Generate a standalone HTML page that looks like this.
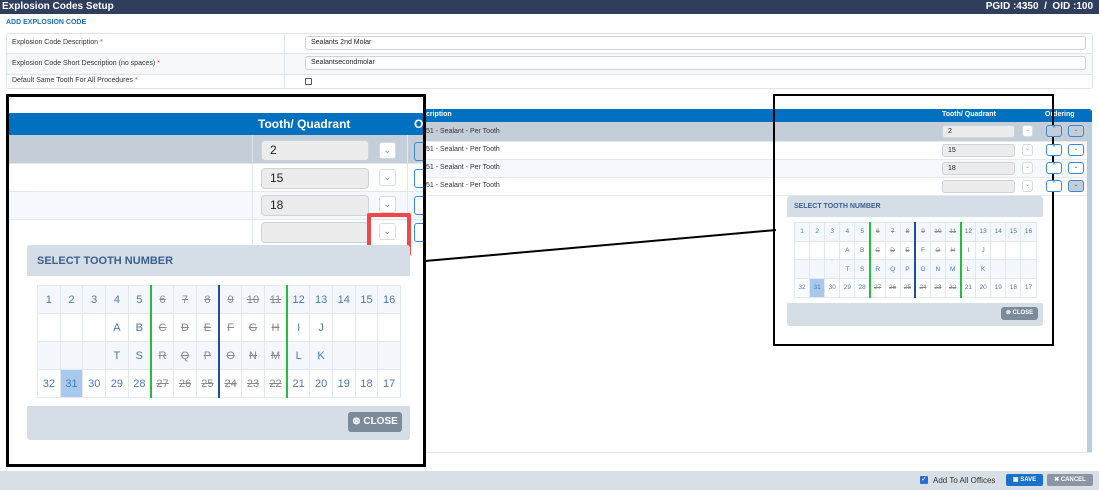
<!DOCTYPE html>
<html><head><meta charset="utf-8">
<style>
*{box-sizing:border-box;margin:0;padding:0}
body{width:1099px;height:490px;overflow:hidden;background:#fff;font-family:"Liberation Sans",sans-serif;position:relative}
.a{position:absolute}
.top{left:0;top:0;width:1099px;height:14px;background:#2f3e5c;color:#fff;font-size:10px;font-weight:bold;line-height:14px}
.lbl{font-size:7px;color:#333}
.req{color:#e03030}
.inp{background:#fff;border:1px solid #ccd3da;border-radius:3px;font-size:7px;padding-left:5px;line-height:12px;color:#222}
.grid{border-collapse:collapse;position:absolute;background:#fff}
.grid td{border:1px solid #e1e7ee;text-align:center;color:#4a78b0;padding:0}
.grid tr:nth-child(odd) td{background:#f4f8fc}
.grid td.s{color:#888;text-decoration:line-through}
.grid td.g{border-left:2px solid #22c03a}
.grid td.b{border-left:2px solid #1a4f9c}
.grid td.h{background:#a8c8ee!important}
.big td{width:22.7px;height:28px;font-size:11px}
.sm td{width:15.1px;height:18.7px;font-size:6.5px}
.dd{background:#fff;border:1px solid #d5dbe2;border-radius:3px;color:#7a9cc4;text-align:center}
.ord{border:1px solid #3a86d0;border-radius:3px;background:#fff;color:#2a6fc0;text-align:center}
</style></head><body>
<div class="a top"><span style="padding-left:2px">Explosion Codes Setup</span><span class="a" style="right:6px;top:0">PGID :4350 &nbsp;/&nbsp; OID :100</span></div>
<div class="a" style="left:6px;top:19px;font-size:7px;font-weight:bold;color:#1a6fc0">ADD EXPLOSION CODE</div>
<div class="a" style="left:6px;top:33px;width:1087px;height:56px;border:1px solid #dde3ea;border-radius:3px"></div>
<div class="a" style="left:7px;top:53px;width:1085px;height:1px;background:#dde3ea"></div>
<div class="a" style="left:7px;top:74px;width:1085px;height:1px;background:#dde3ea"></div>
<div class="a" style="left:7px;top:54px;width:1085px;height:20px;background:#f6f8fa"></div>
<div class="a" style="left:284px;top:34px;width:1px;height:54px;background:#dde3ea"></div>
<div class="a lbl" style="left:12px;top:39px">Explosion Code Description <span class="req">*</span></div>
<div class="a lbl" style="left:12px;top:60px">Explosion Code Short Description (no spaces) <span class="req">*</span></div>
<div class="a lbl" style="left:12px;top:77px">Default Same Tooth For All Procedures <span class="req">*</span></div>
<div class="a inp" style="left:305px;top:36px;width:781px;height:14px">Sealants 2nd Molar</div>
<div class="a inp" style="left:305px;top:56px;width:781px;height:14px">Sealantsecondmolar</div>
<div class="a" style="left:305px;top:78px;width:7px;height:7px;border:1px solid #555;border-radius:1px"></div>

<div class="a" style="left:420px;top:109px;width:672px;height:13px;background:#0070c0;border-radius:3px 3px 0 0"></div>
<div class="a" style="left:426px;top:111px;font-size:7px;font-weight:bold;color:#fff">cription</div>
<div class="a" style="left:942px;top:111px;font-size:7px;font-weight:bold;color:#fff">Tooth/ Quadrant</div>
<div class="a" style="left:1045px;top:111px;font-size:7px;font-weight:bold;color:#fff">Ordering</div>
<div class="a" style="left:420px;top:122px;width:668px;height:19px;background:#c4ced8"></div>
<div class="a" style="left:420px;top:159px;width:668px;height:18px;background:#f5f9fd"></div>
<div class="a" style="left:420px;top:141px;width:668px;height:1px;background:#e3e9ef"></div>
<div class="a" style="left:420px;top:159px;width:668px;height:1px;background:#e3e9ef"></div>
<div class="a" style="left:420px;top:177px;width:668px;height:1px;background:#e3e9ef"></div>
<div class="a" style="left:420px;top:195px;width:668px;height:1px;background:#e3e9ef"></div>
<div class="a" style="left:426px;top:128px;font-size:7px;color:#333">51 - Sealant - Per Tooth</div>
<div class="a" style="left:426px;top:146px;font-size:7px;color:#333">51 - Sealant - Per Tooth</div>
<div class="a" style="left:426px;top:164px;font-size:7px;color:#333">51 - Sealant - Per Tooth</div>
<div class="a" style="left:426px;top:182px;font-size:7px;color:#333">51 - Sealant - Per Tooth</div>
<div class="a" style="left:1087px;top:122px;width:5px;height:330px;background:#b7cde4"></div>
<div class="a" style="left:420px;top:452px;width:672px;height:1px;background:#dfe5ec"></div>
<div class="a" style="left:0;top:471px;width:1099px;height:19px;background:#d8dfe7"></div>
<div class="a" style="left:920px;top:476px;width:8px;height:8px;background:#2a6fd0;border-radius:1px;color:#fff;font-size:7px;line-height:8px;text-align:center">✓</div>
<div class="a" style="left:933px;top:476px;font-size:8px;color:#333">Add To All Offices</div>
<div class="a" style="left:1006px;top:474px;width:37px;height:12px;background:#1a72c8;border-radius:2px;color:#fff;font-size:6px;line-height:12px;text-align:center;font-weight:bold">▣ SAVE</div>
<div class="a" style="left:1047px;top:474px;width:46px;height:12px;background:#8c96a3;border-radius:2px;color:#fff;font-size:6px;line-height:12px;text-align:center;font-weight:bold">✖ CANCEL</div>

<div class="a" style="left:773px;top:94px;width:281px;height:252px;border:2px solid #000;background:transparent"></div>
<div class="a" style="left:775px;top:96px;width:277px;height:12px;background:#fff"></div>
<div class="a inp" style="left:942px;top:125px;width:73px;height:13px;background:#ececec">2</div>
<div class="a inp" style="left:942px;top:144px;width:73px;height:13px;background:#ececec">15</div>
<div class="a inp" style="left:942px;top:162px;width:73px;height:13px;background:#ececec">18</div>
<div class="a inp" style="left:942px;top:180px;width:73px;height:13px;background:#ececec"></div>
<div class="a dd" style="left:1022px;top:125px;width:11px;height:12px;font-size:6px">⌄</div>
<div class="a dd" style="left:1022px;top:144px;width:11px;height:12px;font-size:6px">⌄</div>
<div class="a dd" style="left:1022px;top:162px;width:11px;height:12px;font-size:6px">⌄</div>
<div class="a dd" style="left:1022px;top:180px;width:11px;height:12px;font-size:6px">⌄</div>
<div class="a ord" style="left:1046px;top:125px;width:16px;height:12px;font-size:6px;background:#c4ced8">^</div>
<div class="a ord" style="left:1068px;top:125px;width:16px;height:12px;font-size:6px;background:#c4ced8">⌄</div>
<div class="a ord" style="left:1046px;top:144px;width:16px;height:12px;font-size:6px">^</div>
<div class="a ord" style="left:1068px;top:144px;width:16px;height:12px;font-size:6px">⌄</div>
<div class="a ord" style="left:1046px;top:162px;width:16px;height:12px;font-size:6px">^</div>
<div class="a ord" style="left:1068px;top:162px;width:16px;height:12px;font-size:6px">⌄</div>
<div class="a ord" style="left:1046px;top:180px;width:16px;height:12px;font-size:6px">^</div>
<div class="a ord" style="left:1068px;top:180px;width:16px;height:12px;font-size:6px;background:#c4ced8">⌄</div>
<div class="a" style="left:787px;top:196px;width:256px;height:130px;background:#d5dee7;border-radius:3px"></div>
<div class="a" style="left:787px;top:217px;width:256px;height:86px;background:#fff"></div>
<div class="a" style="left:794px;top:203px;font-size:7px;font-weight:bold;color:#3a5f8e">SELECT TOOTH NUMBER</div>
<table class="grid sm" style="left:794px;top:222px">
<tr><td>1</td><td>2</td><td>3</td><td>4</td><td>5</td><td class="g s">6</td><td class="s">7</td><td class="s">8</td><td class="b s">9</td><td class="s">10</td><td class="s">11</td><td class="g">12</td><td>13</td><td>14</td><td>15</td><td>16</td></tr>
<tr><td></td><td></td><td></td><td>A</td><td>B</td><td class="g s">C</td><td class="s">D</td><td class="s">E</td><td class="b">F</td><td class="s">G</td><td class="s">H</td><td class="g">I</td><td>J</td><td></td><td></td><td></td></tr>
<tr><td></td><td></td><td></td><td>T</td><td>S</td><td class="g">R</td><td>Q</td><td>P</td><td class="b">O</td><td>N</td><td>M</td><td class="g">L</td><td>K</td><td></td><td></td><td></td></tr>
<tr><td>32</td><td class="h">31</td><td>30</td><td>29</td><td>28</td><td class="g s">27</td><td class="s">26</td><td class="s">25</td><td class="b s">24</td><td class="s">23</td><td class="s">22</td><td class="g">21</td><td>20</td><td>19</td><td>18</td><td>17</td></tr>
</table>
<div class="a" style="left:1001px;top:307px;width:37px;height:13px;background:#7d8a99;border-radius:3px;color:#fff;font-size:6px;font-weight:bold;line-height:13px;text-align:center">⊗ CLOSE</div>

<svg class="a" style="left:0;top:0" width="1099" height="490"><line x1="425" y1="261" x2="776" y2="230" stroke="#000" stroke-width="2"/></svg>

<div class="a" style="left:6px;top:94px;width:420px;height:373px;border:3px solid #000;background:#fff;overflow:hidden">
  <div class="a" style="left:0;top:16px;width:420px;height:22px;background:#0070c0"></div>
  <div class="a" style="left:249px;top:20px;font-size:12px;font-weight:bold;color:#fff">Tooth/ Quadrant</div>
  <div class="a" style="left:405px;top:20px;font-size:12px;font-weight:bold;color:#fff">O</div>
  <div class="a" style="left:0;top:38px;width:420px;height:28px;background:#c4ced8"></div>
  <div class="a" style="left:0;top:94px;width:420px;height:28px;background:#f5f9fd"></div>
  <div class="a" style="left:0;top:66px;width:420px;height:1px;background:#e0e7ee"></div>
  <div class="a" style="left:0;top:94px;width:420px;height:1px;background:#e0e7ee"></div>
  <div class="a" style="left:0;top:122px;width:420px;height:1px;background:#e0e7ee"></div>
  <div class="a" style="left:243px;top:38px;width:1px;height:112px;background:#e0e7ee"></div>
  <div class="a" style="left:398px;top:38px;width:1px;height:112px;background:#e0e7ee"></div>
  <div class="a inp" style="left:252px;top:43px;width:108px;height:21px;background:#ececec;font-size:12px;line-height:19px;padding-left:8px;border-radius:4px">2</div>
  <div class="a inp" style="left:252px;top:71px;width:108px;height:21px;background:#ececec;font-size:12px;line-height:19px;padding-left:8px;border-radius:4px">15</div>
  <div class="a inp" style="left:252px;top:98px;width:108px;height:21px;background:#ececec;font-size:12px;line-height:19px;padding-left:8px;border-radius:4px">18</div>
  <div class="a inp" style="left:252px;top:125px;width:108px;height:21px;background:#ececec;border-radius:4px"></div>
  <div class="a dd" style="left:370px;top:45px;width:17px;height:17px;font-size:10px;line-height:15px">⌄</div>
  <div class="a dd" style="left:370px;top:72px;width:17px;height:17px;font-size:10px;line-height:15px">⌄</div>
  <div class="a dd" style="left:370px;top:99px;width:17px;height:17px;font-size:10px;line-height:15px">⌄</div>
  <div class="a dd" style="left:370px;top:126px;width:17px;height:17px;font-size:10px;line-height:15px">⌄</div>
  <div class="a ord" style="left:405px;top:45px;width:20px;height:19px;background:#c4ced8"></div>
  <div class="a ord" style="left:405px;top:72px;width:20px;height:19px"></div>
  <div class="a ord" style="left:405px;top:99px;width:20px;height:19px"></div>
  <div class="a ord" style="left:405px;top:126px;width:20px;height:19px"></div>
  <div class="a" style="left:358px;top:116px;width:44px;height:43px;border:4px solid #f04848;border-radius:2px"></div>
  <div class="a" style="left:18px;top:148px;width:383px;height:195px;background:#d5dee7;border-radius:3px"></div>
  <div class="a" style="left:18px;top:179px;width:383px;height:130px;background:#fff"></div>
  <div class="a" style="left:28px;top:158px;font-size:11px;font-weight:bold;color:#3a5f8e">SELECT TOOTH NUMBER</div>
  <table class="grid big" style="left:28px;top:188px">
  <tr><td>1</td><td>2</td><td>3</td><td>4</td><td>5</td><td class="g s">6</td><td class="s">7</td><td class="s">8</td><td class="b s">9</td><td class="s">10</td><td class="s">11</td><td class="g">12</td><td>13</td><td>14</td><td>15</td><td>16</td></tr>
  <tr><td></td><td></td><td></td><td>A</td><td>B</td><td class="g s">C</td><td class="s">D</td><td class="s">E</td><td class="b s">F</td><td class="s">G</td><td class="s">H</td><td class="g">I</td><td>J</td><td></td><td></td><td></td></tr>
  <tr><td></td><td></td><td></td><td>T</td><td>S</td><td class="g s">R</td><td class="s">Q</td><td class="s">P</td><td class="b s">O</td><td class="s">N</td><td class="s">M</td><td class="g">L</td><td>K</td><td></td><td></td><td></td></tr>
  <tr><td>32</td><td class="h">31</td><td>30</td><td>29</td><td>28</td><td class="g s">27</td><td class="s">26</td><td class="s">25</td><td class="b s">24</td><td class="s">23</td><td class="s">22</td><td class="g">21</td><td>20</td><td>19</td><td>18</td><td>17</td></tr>
  </table>
  <div class="a" style="left:339px;top:315px;width:54px;height:20px;background:#7d8a99;border-radius:3px;color:#fff;font-size:10px;font-weight:bold;line-height:20px;text-align:center">⊗ CLOSE</div>
</div>
</body></html>
